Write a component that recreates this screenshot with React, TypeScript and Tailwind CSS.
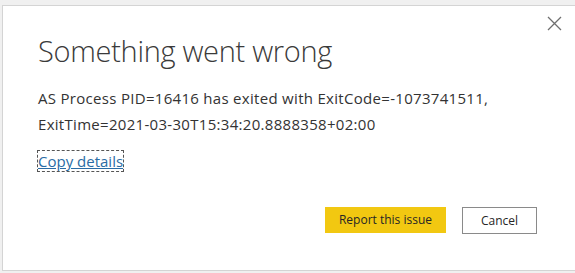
import React from "react";

export default function App() {
  return (
    <div className="w-[575px] h-[273px] bg-[#f0f0f0] pt-[5px] pl-[2px] overflow-hidden" style={{ fontFamily: '"Open Sans", "Noto Sans", sans-serif' }}>
      <div className="relative h-[266px] w-[600px] bg-white border border-[#d4d4d4] pl-[35px] pt-[25px]">
        <button className="absolute left-[542px] top-[8px] w-[18px] h-[18px] flex items-center justify-center">
          <svg width="15" height="15" viewBox="0 0 15 15" fill="none" stroke="#6f6f6f" strokeWidth="1.3">
            <path d="M1 1L14 14M14 1L1 14" />
          </svg>
        </button>
        <h1 className="text-[29px] font-light text-[#3a3a3a] leading-[40px] tracking-[-0.3px]">Something went wrong</h1>
        <div className="mt-[14px] text-[15px] leading-[26px] text-[#333333] tracking-[0.3px]">
          <div>AS Process PID=16416 has exited with ExitCode=-1073741511,</div>
          <div>ExitTime=2021-03-30T15:34:20.8888358+02:00</div>
        </div>
        <div className="mt-[12px]">
          <span className="inline-block outline-1 outline-dashed outline-[#555] text-[15px] leading-[20px] text-[#2a6ca5] underline">Copy details</span>
        </div>
        <div className="flex justify-end gap-[16px] w-[499px] mt-[34px]">
          <button className="h-[26px] w-[121px] bg-[#f2c811] text-[12px] text-[#262626]">Report this issue</button>
          <button className="h-[27px] w-[75px] bg-white border border-[#8a8a8a] text-[12px] text-[#262626]">Cancel</button>
        </div>
      </div>
    </div>
  );
}
